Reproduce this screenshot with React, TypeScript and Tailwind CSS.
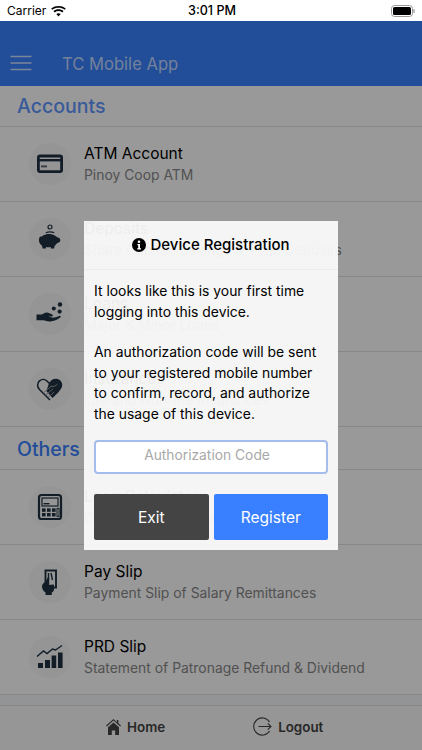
import type { ReactNode } from "react"

const ink = "#1f3141"

function CardIcon() {
  return (
    <svg width="30" height="30" viewBox="0 0 30 30">
      <rect x="3.4" y="7" width="23.2" height="15.6" rx="1.6" fill="none" stroke={ink} strokeWidth="2.8" />
      <rect x="3" y="10" width="24" height="2.4" fill={ink} />
      <rect x="6" y="16.4" width="6" height="2" fill="#5f6c78" />
    </svg>
  )
}

function PiggyIcon() {
  return (
    <svg width="30" height="30" viewBox="0 0 30 30" fill={ink}>
      <circle cx="15" cy="3" r="2" fill="none" stroke={ink} strokeWidth="1.2" />
      <path d="M10.5 8.2c2.6-1.4 6.4-1.4 9 0l-.6 1c-2.3-1-5.5-1-7.8 0z" />
      <path d="M5 12.5c1.4.4 2.2-.2 3-1 2.2-1.5 5.5-1.9 8.3-1.3 2.6.5 4.8 1.6 6.2 3.4 1.2-.2 2.4.6 2.7 1.9.2.9 0 2.2-.9 2.8-.8.4-1.7.7-2.6 1.3-.5.9-1.2 1.6-2 2.1l-.6 2.8h-3.2l-.3-1.6c-1.6.3-3 .3-4.5 0l-.3 1.6H7.6L7 21.7c-1.6-1.1-2.6-2.7-3-4.7-.2-1.7.2-3.4 1-4.5z" />
    </svg>
  )
}

function HandIcon() {
  return (
    <svg width="30" height="30" viewBox="0 0 30 30" fill={ink}>
      <circle cx="25" cy="5.5" r="2.2" />
      <circle cx="18.8" cy="9.5" r="2" />
      <circle cx="24.6" cy="12.6" r="2.1" />
      <path d="M1.5 15.5h5.2l3.6-1.7c1.4-.5 2.5-.4 3.6.2l3.4 1.6c1.1.7.5 2.3-.9 2l-3.4-.8 3.8 1.8c2 .2 4.7-.5 8.2-1.9.9 0 1 1 .4 1.5-2.8 2.4-6.6 4-10.4 4.2-2.8.1-4.6-.8-6.6-1.2H1.5z" />
    </svg>
  )
}

function HeartIcon() {
  return (
    <svg width="30" height="30" viewBox="0 0 30 30">
      <path d="M15 26 4.5 15.5c-2.6-2.8-2.4-6.5 0-8.6 2.4-2 5.8-1.8 8 .6l2.2 2.2" fill="none" stroke={ink} strokeWidth="1.6" />
      <path d="M14 9.2c2-3.6 5.6-5 8.6-4.2 3.4.9 5.4 4.4 4.4 7.8-.6 2.4-6.4 9-9.6 11.2l-6-7z" fill={ink} />
      <path d="M8 19.2 16.4 12M10.4 21.4 18 14.8M12.8 23.6l6.4-5.6" stroke="#9a9a9a" strokeWidth="1" />
      <path d="M16 12.5c2.5.3 4.8-.5 6.5-2.4" fill="none" stroke="#9a9a9a" strokeWidth="1" />
    </svg>
  )
}

function CalculatorIcon() {
  const keys = [
    [7, 16.4], [12, 16.4], [17, 16.4],
    [7, 21], [12, 21], [17, 21],
  ]
  return (
    <svg width="30" height="30" viewBox="0 0 30 30">
      <rect x="4" y="3" width="22" height="24" rx="2.6" fill="none" stroke={ink} strokeWidth="2.2" />
      <rect x="7" y="6" width="16" height="8" fill="none" stroke={ink} strokeWidth="1.2" />
      <rect x="8.5" y="11" width="6" height="1.4" fill={ink} />
      {keys.map(([x, y]) => (
        <rect key={`${x}-${y}`} x={x} y={y} width="3.6" height="3.4" fill={ink} />
      ))}
      <rect x="22" y="16.4" width="2" height="8" fill="none" stroke={ink} strokeWidth="1" />
    </svg>
  )
}

function SlipIcon() {
  return (
    <svg width="30" height="30" viewBox="0 0 30 30">
      <path d="M10.5 16V3.5h10.5v17h-3" fill="none" stroke={ink} strokeWidth="1.9" />
      <path d="M13.5 6v7M16 6l1.5 7" stroke={ink} strokeWidth="1.4" />
      <path d="M7 18.5c1-2 2.4-3.4 4-4.5l1.6-3.2c.8-.6 1.6 0 1.6 1v6.2l3.8-.6c.6 0 1 .4 1 1v4.2c0 1.5-1 2.4-2.2 2.9v2.5H10.5v-2.5C8 24 6.8 21 7 18.5z" fill={ink} />
    </svg>
  )
}

function ChartIcon() {
  return (
    <svg width="30" height="30" viewBox="0 0 30 30" fill={ink}>
      <path d="M2 14.5 8.5 9l3.5 2.5L17.5 7l3 1L27 3.5" fill="none" stroke={ink} strokeWidth="1.4" />
      <rect x="3" y="21" width="5" height="5" />
      <rect x="10" y="18" width="5" height="8" />
      <rect x="16.6" y="13.5" width="4.6" height="12.5" />
      <rect x="23" y="10.5" width="4.6" height="15.5" />
    </svg>
  )
}

function Row({ icon, title, sub }: { icon: ReactNode; title: string; sub: string }) {
  return (
    <div className="flex h-[75px] items-center border-b border-[#e3e3e3] bg-white pl-[29px]">
      <div className="flex h-[42px] w-[42px] shrink-0 items-center justify-center rounded-full bg-[#f8f8f8]">{icon}</div>
      <div className="ml-[13px]">
        <div className="text-[15.5px] leading-[22px] text-black">{title}</div>
        <div className="text-[13.9px] leading-[20px] whitespace-nowrap text-[#888]">{sub}</div>
      </div>
    </div>
  )
}

export default function App() {
  return (
    <div className="relative flex h-[750px] w-[422px] flex-col overflow-hidden bg-white font-['Inter',sans-serif]">
      {/* status bar */}
      <div className="relative z-20 flex h-[21px] items-center justify-between bg-white px-[7px] pt-[1px] text-[12px] text-black">
        <div className="flex items-center gap-[5px]">
          <span>Carrier</span>
          <svg width="15" height="11" viewBox="0 0 16 12" fill="black">
            <path d="M8 11.5 5.6 8.8c1.4-1.1 3.4-1.1 4.8 0zM3.9 7 2.5 5.4c3.2-2.6 7.8-2.6 11 0L12.1 7c-2.4-1.9-5.8-1.9-8.2 0zM1.3 4.2 0 2.7C4.6-.9 11.4-.9 16 2.7l-1.3 1.5C10.8 1.3 5.2 1.3 1.3 4.2z" />
          </svg>
        </div>
        <span className="absolute left-[188px] text-[12.6px] font-medium">3:01 PM</span>
        <svg width="24" height="12" viewBox="0 0 24 12">
          <rect x="0.5" y="0.5" width="21" height="11" rx="3" fill="none" stroke="#999" />
          <rect x="2" y="2" width="18" height="8" rx="1.6" fill="black" />
          <rect x="22.4" y="4" width="1.2" height="4" rx="0.6" fill="#999" />
        </svg>
      </div>

      {/* app header */}
      <div className="flex h-[65px] items-end bg-[#3880ff] pb-[10px] pl-[10px]">
        <svg width="22" height="16" viewBox="0 0 22 16" className="mb-[5px]">
          <path d="M0.5 1.5h21M0.5 8h21M0.5 14.5h21" stroke="white" strokeWidth="1.6" opacity="0.75" />
        </svg>
        <span className="ml-[30px] text-[16.6px] leading-[24px] text-white/70">TC Mobile App</span>
      </div>

      {/* menu list */}
      <div className="flex-1 bg-[#f6f7fa]">
        <div className="flex h-[41px] items-center border-b border-[#e3e3e3] bg-white pt-[2px] pl-[17px] text-[19.5px] font-medium text-[#5f97ff]">
          Accounts
        </div>
        <Row icon={<CardIcon />} title="ATM Account" sub="Pinoy Coop ATM" />
        <Row icon={<PiggyIcon />} title="Deposits" sub="Share Capital, Savings & Time Deposits" />
        <Row icon={<HandIcon />} title="Loans" sub="Major & Minor Loans" />
        <Row icon={<HeartIcon />} title="Insurances" sub="Life and Non-life Insurances" />
        <div className="flex h-[43px] items-center border-b border-[#e3e3e3] bg-white pt-[4px] pl-[17px] text-[19.5px] font-medium text-[#3880ff]">
          Others
        </div>
        <Row icon={<CalculatorIcon />} title="Loan Calculator" sub="Calculate your loans" />
        <Row icon={<SlipIcon />} title="Pay Slip" sub="Payment Slip of Salary Remittances" />
        <Row icon={<ChartIcon />} title="PRD Slip" sub="Statement of Patronage Refund & Dividend" />
      </div>

      {/* footer tabs */}
      <div className="flex h-[45px] items-center gap-[88px] border-t border-[#e3e3e3] bg-[#fafafa] pb-[2px] pl-[106px] text-[13.4px] font-semibold text-[#444]">
        <div className="flex items-center gap-[6px]">
          <svg width="15" height="16" viewBox="0 0 15 16" fill="#444">
            <path d="M7.5 0 0 6.6l.8.8L7.5 1.6l6.7 5.8.8-.8-2.6-2.3V1h-1.6v2.3z" />
            <path d="M2 8.2 7.5 3.4 13 8.2V16H9.2v-4.6H5.8V16H2z" />
          </svg>
          <span>Home</span>
        </div>
        <div className="flex items-center gap-[6px]">
          <svg width="19" height="19" viewBox="0 0 19 19" fill="none" stroke="#444" strokeWidth="1.1">
            <path d="M16.6 5A8.6 8.6 0 1 0 16.6 14" />
            <path d="M5.5 9.5H18M14.8 6.3l3.2 3.2-3.2 3.2" />
          </svg>
          <span>Logout</span>
        </div>
      </div>

      {/* dimmed backdrop with the registration alert */}
      <div className="absolute inset-x-0 top-[21px] bottom-0 flex items-center justify-center bg-black/40">
        <div className="w-[254px] bg-[#fafafa]/95 text-black">
          <div className="flex h-[49px] items-center justify-center gap-[4px] border-b border-[#ececec] text-[15px] font-[450]">
            <svg width="14" height="14" viewBox="0 0 14 14">
              <circle cx="7" cy="7" r="7" fill="black" />
              <circle cx="7" cy="3.8" r="1.3" fill="white" />
              <path d="M5.4 6h2.6v4.2h1V11.4H5.2v-1.2h1V7.2h-.8z" fill="white" />
            </svg>
            <span>Device Registration</span>
          </div>
          <div className="px-[10px] pt-[11px] pb-[10px] text-[13.9px] leading-[20.6px]">
            <p>It looks like this is your first time logging into this device.</p>
            <p className="mt-[19.5px]">An authorization code will be sent to your registered mobile number to confirm, record, and authorize the usage of this device.</p>
            <input
              placeholder="Authorization Code"
              className="mt-[15px] h-[34px] w-full rounded-[4px] border-2 border-[#a4bdec] bg-white pr-[8px] pb-[4px] text-center text-[13.8px] outline-none placeholder:text-[#a8a8a8]"
            />
            <div className="mt-[20px] flex gap-[5px]">
              <button className="h-[46px] flex-1 rounded-[2px] bg-[#444] pt-[3px] text-[15.5px] text-white">Exit</button>
              <button className="h-[46px] flex-1 rounded-[2px] bg-[#3880ff] pt-[3px] text-[15.5px] text-white">Register</button>
            </div>
          </div>
        </div>
      </div>
    </div>
  )
}
